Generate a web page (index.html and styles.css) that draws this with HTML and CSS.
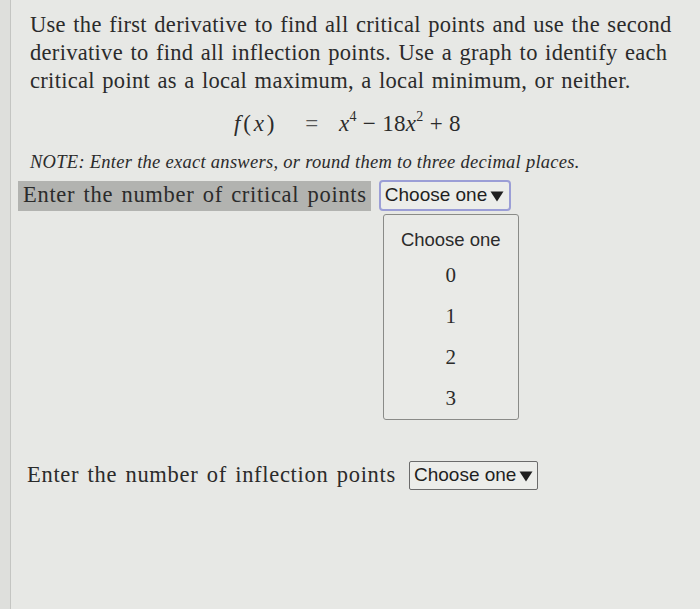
FILE: index.html
```html
<!DOCTYPE html>
<html lang="en">
<head>
    <meta charset="UTF-8">
    <meta name="viewport" content="width=device-width, initial-scale=1.0">
    <title>Critical and inflection points</title>
    <link rel="stylesheet" href="styles.css">
</head>
<body>
    <main class="page">
        <p class="problem">Use the first derivative to find all critical points and use the second derivative to find all inflection points. Use a graph to identify each critical point as a local maximum, a local minimum, or neither.</p>

        <div class="formula">
            <span class="lhs"><i>f</i>(<i>x</i>)</span>
            <span class="eq">=</span>
            <span class="rhs"><i>x</i><sup>4</sup> &minus; 18<i>x</i><sup>2</sup> + 8</span>
        </div>

        <p class="note">NOTE: Enter the exact answers, or round them to three decimal places.</p>

        <div class="answer-row">
            <span class="label highlighted">Enter the number of critical points</span>
            <div class="picker">
                <div class="select focused">Choose one<svg class="arrow" width="14" height="11" viewBox="0 0 14 11"><path d="M0.5 0.5 H13.5 L7 10.5 Z" fill="#1f1f1f"/></svg></div>
                <ul class="menu">
                    <li class="sans">Choose one</li>
                    <li>0</li>
                    <li>1</li>
                    <li>2</li>
                    <li>3</li>
                </ul>
            </div>
        </div>

        <div class="answer-row second">
            <span class="label">Enter the number of inflection points</span>
            <div class="picker">
                <div class="select">Choose one<svg class="arrow" width="14" height="11" viewBox="0 0 14 11"><path d="M0.5 0.5 H13.5 L7 10.5 Z" fill="#1f1f1f"/></svg></div>
            </div>
        </div>
    </main>
</body>
</html>
```

FILE: styles.css
```css
body {
    margin: 0;
    padding: 0;
    background: #dedfdc;
    color: #2b2b2b;
    font-family: "Liberation Serif", "Times New Roman", serif;
}

.page {
    margin-left: 10px;
    min-height: 609px;
    box-sizing: border-box;
    border-left: 1px solid #c4c5c2;
    background: #e7e8e5;
    padding: 11px 20px 0 19px;
}

.problem {
    margin: 0;
    font-size: 22.5px;
    line-height: 28px;
    letter-spacing: 0.3px;
    word-spacing: 1.5px;
}

.formula {
    display: flex;
    align-items: baseline;
    margin: 16px 0 0 202px;
    font-size: 23px;
    letter-spacing: 0.8px;
}

.formula i {
    font-style: italic;
}

.formula .lhs i {
    margin: 0 2px;
}

.formula sup {
    font-size: 14px;
    line-height: 0;
    vertical-align: 10px;
}

.formula .eq {
    margin: 0 20px 0 30px;
    color: #555;
}

.formula .rhs {
    letter-spacing: 0.3px;
}

.note {
    margin: 15px 0 0;
    font-style: italic;
    font-size: 18.5px;
    letter-spacing: 0.28px;
}

.answer-row {
    display: flex;
    align-items: center;
    margin-top: 7px;
    font-size: 22.5px;
}

.answer-row.second {
    margin-top: 249px;
    margin-left: -6px;
}

.label {
    padding: 2px 3px 3px 6px;
    margin-left: -3px;
    letter-spacing: 0.7px;
    word-spacing: 2px;
}

.label.highlighted {
    background: #b2b3b0;
    margin-left: -12px;
    padding: 1px 4px 3px 5px;
}

.picker {
    position: relative;
    margin-left: 8px;
}

.answer-row.second .picker {
    margin-left: 10px;
}

.select {
    display: flex;
    align-items: center;
    font-family: "Liberation Sans", Arial, sans-serif;
    font-size: 19px;
    color: #1f1f1f;
    padding: 2px 4px 3px 4px;
    border: 1px solid #6b6b6b;
    border-radius: 2px;
    background: #ecedea;
    white-space: nowrap;
}

.select.focused {
    border: 2px solid #9b9ed6;
    border-radius: 4px;
    padding: 2px 5px 3px 4px;
}

.arrow {
    margin: 2px 0 0 3px;
}

.menu {
    position: absolute;
    top: 34px;
    left: 4px;
    width: 134px;
    margin: 0;
    padding: 10px 0 0;
    list-style: none;
    border: 1px solid #8a8b88;
    border-radius: 3px;
    background: #e9eae7;
    text-align: center;
    font-size: 21px;
}

.menu li {
    height: 41px;
    line-height: 41px;
}

.menu li.sans {
    height: 30px;
    line-height: 30px;
    font-family: "Liberation Sans", Arial, sans-serif;
    font-size: 18.5px;
}
```
